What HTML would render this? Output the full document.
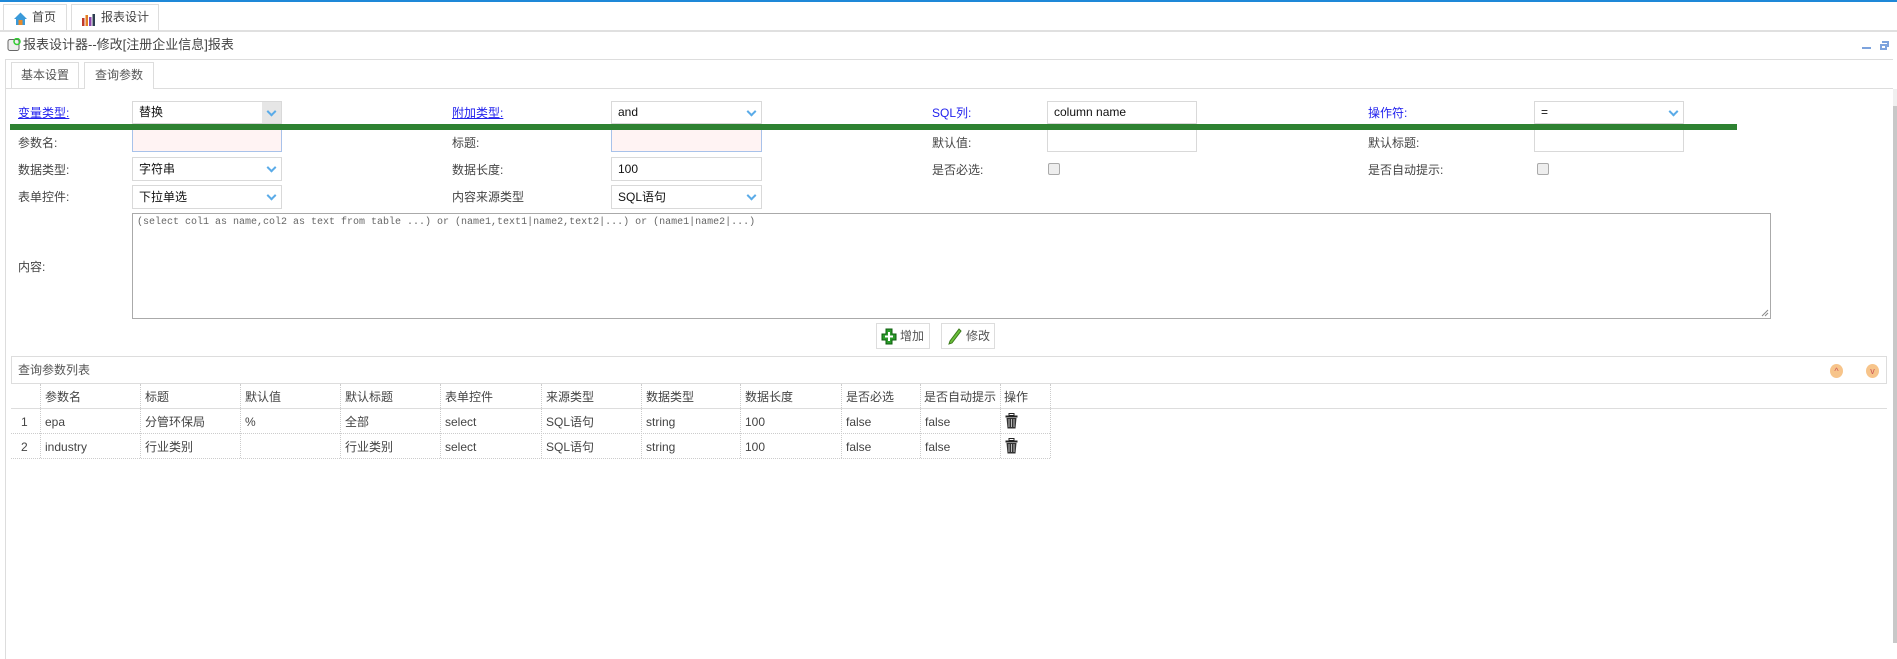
<!DOCTYPE html>
<html><head><meta charset="utf-8">
<style>
*{box-sizing:border-box;margin:0;padding:0}
body{width:1897px;height:643px;overflow:hidden;background:#fff;font-family:"Liberation Sans","Noto Sans CJK SC",sans-serif;font-size:12px;color:#333;position:relative}
.a{position:absolute}
.tab{position:absolute;top:4px;height:27px;border:1px solid #ddd;border-bottom:none;background:#fff;font-size:12px;color:#444;line-height:25px}
.lbl{position:absolute;font-size:12px;color:#444;line-height:16px}
.blue{color:#2222ee}
.box{position:absolute;border:1px solid #d9d9d9;background:#fff;font-size:12px;color:#111;padding-left:6px}
.chev{position:absolute;right:6px;top:50%;width:7px;height:7px;border-right:2px solid #5aabe8;border-bottom:2px solid #5aabe8;transform:translateY(-70%) rotate(45deg)}
.pink{background:#fff3f3;border-color:#a8c2ea}
.th,.td{position:absolute;font-size:12px;color:#444;line-height:16px}
.vl{position:absolute;width:0;border-left:1px dotted #ccc}
</style></head><body>
<div class="a" style="left:0;top:0;width:1897px;height:2px;background:#1e88d8"></div>
<div class="tab" style="left:3px;width:64px;padding-left:10px">
<svg class="a" style="left:9px;top:6px" width="15" height="15" viewBox="0 0 15 15"><path d="M1 8 L7.5 1.5 L14 8 L12 8 L12 14 L3 14 L3 8Z" fill="#3a9ad9"/><rect x="5.5" y="9" width="4" height="5" fill="#e88a2a"/></svg>
<span style="position:absolute;left:28px">首页</span></div>
<div class="tab" style="left:71px;width:88px">
<svg class="a" style="left:9px;top:7px" width="16" height="14" viewBox="0 0 16 14"><rect x="1" y="6" width="2.5" height="8" fill="#c0392b"/><rect x="4.5" y="3" width="2.5" height="11" fill="#e67e22"/><rect x="8" y="5" width="2.5" height="9" fill="#8e44ad"/><rect x="11.5" y="2" width="2.5" height="12" fill="#2c3e50"/></svg>
<span style="position:absolute;left:29px">报表设计</span></div>
<div class="a" style="left:0;top:30px;width:1897px;height:2px;background:#e0e0e0"></div>
<svg class="a" style="left:7px;top:38px" width="14" height="14" viewBox="0 0 14 14"><rect x="1" y="1.5" width="11" height="11" rx="2" fill="#eee" stroke="#666"/><circle cx="10" cy="3.5" r="3" fill="none" stroke="#3c3" stroke-width="1.5"/></svg>
<div class="a" style="left:23px;top:37px;font-size:13px;color:#444;line-height:16px">报表设计器--修改[注册企业信息]报表</div>
<div class="a" style="left:1862px;top:47px;width:9px;height:2px;background:#7da3dd"></div>
<div class="a" style="left:1882px;top:41px;width:7px;height:6px;border:2px solid #7da3dd;border-bottom:none;border-left:none"></div>
<div class="a" style="left:1880px;top:44px;width:7px;height:6px;border:2px solid #7da3dd"></div>
<div class="a" style="left:5px;top:59px;width:1888px;height:600px;border-left:1px solid #ddd;border-top:1px solid #ddd"></div>
<div class="tab" style="left:11px;top:62px;width:68px;text-align:center;font-size:12px;color:#555">基本设置</div>
<div class="tab" style="left:84px;top:62px;width:70px;height:27px;text-align:center;font-size:12px;color:#555;z-index:2">查询参数</div>
<div class="a" style="left:5px;top:88px;width:1888px;height:1px;background:#ddd"></div>
<div class="a" style="left:1893px;top:89px;width:4px;height:554px;background:#f0f0f0"></div>
<div class="a" style="left:1893px;top:106px;width:4px;height:537px;background:#c8c8c8"></div>

<div class="lbl blue" style="left:18px;top:105px;text-decoration:underline">变量类型:</div>
<div class="box" style="left:132px;top:101px;width:150px;height:23px;line-height:21px">替换<div class="a" style="right:0;top:0;width:19px;height:21px;background:#e6e6e6"></div><div class="chev"></div></div>
<div class="lbl blue" style="left:452px;top:105px;text-decoration:underline">附加类型:</div>
<div class="box" style="left:611px;top:101px;width:151px;height:23px;line-height:21px">and<div class="chev"></div></div>
<div class="lbl blue" style="left:932px;top:105px">SQL列:</div>
<div class="box" style="left:1047px;top:101px;width:150px;height:23px;line-height:21px">column name</div>
<div class="lbl blue" style="left:1368px;top:105px">操作符:</div>
<div class="box" style="left:1534px;top:101px;width:150px;height:23px;line-height:21px">=<div class="chev"></div></div>
<div class="lbl" style="left:18px;top:135px">参数名:</div>
<div class="box pink" style="left:132px;top:124px;width:150px;height:28px"></div>
<div class="lbl" style="left:452px;top:135px">标题:</div>
<div class="box pink" style="left:611px;top:124px;width:151px;height:28px"></div>
<div class="lbl" style="left:932px;top:135px">默认值:</div>
<div class="box" style="left:1047px;top:124px;width:150px;height:28px"></div>
<div class="lbl" style="left:1368px;top:135px">默认标题:</div>
<div class="box" style="left:1534px;top:124px;width:150px;height:28px"></div>
<div class="a" style="left:10px;top:124px;width:1727px;height:6px;background:#2e8232"></div>
<div class="lbl" style="left:18px;top:162px">数据类型:</div>
<div class="box" style="left:132px;top:157px;width:150px;height:24px;line-height:22px">字符串<div class="chev"></div></div>
<div class="lbl" style="left:452px;top:162px">数据长度:</div>
<div class="box" style="left:611px;top:157px;width:151px;height:24px;line-height:22px">100</div>
<div class="lbl" style="left:932px;top:162px">是否必选:</div>
<div class="a" style="left:1048px;top:163px;width:12px;height:12px;border:1px solid #aaa;border-radius:2px;background:#eee"></div>
<div class="lbl" style="left:1368px;top:162px">是否自动提示:</div>
<div class="a" style="left:1537px;top:163px;width:12px;height:12px;border:1px solid #aaa;border-radius:2px;background:#eee"></div>
<div class="lbl" style="left:18px;top:189px">表单控件:</div>
<div class="box" style="left:132px;top:185px;width:150px;height:24px;line-height:22px">下拉单选<div class="chev"></div></div>
<div class="lbl" style="left:452px;top:189px">内容来源类型</div>
<div class="box" style="left:611px;top:185px;width:151px;height:24px;line-height:22px">SQL语句<div class="chev"></div></div>
<div class="lbl" style="left:18px;top:259px">内容:</div>
<div class="a" style="left:132px;top:213px;width:1639px;height:106px;border:1px solid #aaa;padding:3px 4px;font-family:'Liberation Mono',monospace;font-size:10px;color:#666;white-space:pre">(select col1 as name,col2 as text from table ...) or (name1,text1|name2,text2|...) or (name1|name2|...)</div>
<svg class="a" style="left:1761px;top:309px" width="8" height="8"><path d="M7 1 L1 7 M7 4 L4 7" stroke="#888"/></svg>
<div class="a" style="left:876px;top:323px;width:54px;height:26px;border:1px solid #ddd;font-size:12px;color:#555;line-height:24px;padding-left:23px">增加
<svg class="a" style="left:4px;top:4px" width="16" height="17" viewBox="0 0 16 17"><path d="M5 1h6v5h4v6h-4v4H5v-4H1V6h4z" fill="#2a9a2a" stroke="#0d5d0d"/><path d="M7 4h2v3.5h3v2H9V13H7V9.5H4v-2h3z" fill="#fff"/></svg></div>
<div class="a" style="left:941px;top:323px;width:54px;height:26px;border:1px solid #ddd;font-size:12px;color:#555;line-height:24px;padding-left:24px">修改
<svg class="a" style="left:6px;top:4px" width="14" height="17" viewBox="0 0 14 17"><path d="M11 1 L13 3 L4 15 L1 16 L2 13Z" fill="#6bbf3a" stroke="#3a7a1a"/></svg></div>
<div class="a" style="left:11px;top:356px;width:1876px;height:28px;border:1px solid #ddd;font-size:12px;color:#555;line-height:26px;padding-left:6px">查询参数列表</div>
<div class="a" style="left:1830px;top:364px;width:13px;height:14px;border-radius:50%;background:#f7c48a;color:#c55;font-size:9px;text-align:center;line-height:14px">^</div>
<div class="a" style="left:1866px;top:364px;width:13px;height:14px;border-radius:50%;background:#f7c48a;color:#c55;font-size:9px;text-align:center;line-height:14px">v</div>
<div class="a" style="left:11px;top:408px;width:1876px;height:1px;background:#ddd"></div>
<div class="a" style="left:11px;top:433px;width:1039px;border-top:1px dotted #ccc"></div>
<div class="a" style="left:11px;top:458px;width:1039px;border-top:1px dotted #ccc"></div>
<div class="vl" style="left:40px;top:384px;height:74px"></div>
<div class="vl" style="left:140px;top:384px;height:74px"></div>
<div class="vl" style="left:240px;top:384px;height:74px"></div>
<div class="vl" style="left:340px;top:384px;height:74px"></div>
<div class="vl" style="left:440px;top:384px;height:74px"></div>
<div class="vl" style="left:541px;top:384px;height:74px"></div>
<div class="vl" style="left:641px;top:384px;height:74px"></div>
<div class="vl" style="left:740px;top:384px;height:74px"></div>
<div class="vl" style="left:841px;top:384px;height:74px"></div>
<div class="vl" style="left:920px;top:384px;height:74px"></div>
<div class="vl" style="left:1000px;top:384px;height:74px"></div>
<div class="vl" style="left:1050px;top:384px;height:74px"></div>
<div class="th" style="left:45px;top:389px">参数名</div>
<div class="th" style="left:145px;top:389px">标题</div>
<div class="th" style="left:245px;top:389px">默认值</div>
<div class="th" style="left:345px;top:389px">默认标题</div>
<div class="th" style="left:445px;top:389px">表单控件</div>
<div class="th" style="left:546px;top:389px">来源类型</div>
<div class="th" style="left:646px;top:389px">数据类型</div>
<div class="th" style="left:745px;top:389px">数据长度</div>
<div class="th" style="left:846px;top:389px">是否必选</div>
<div class="th" style="left:924px;top:389px">是否自动提示</div>
<div class="th" style="left:1004px;top:389px">操作</div>
<div class="td" style="left:21px;top:414px">1</div>
<div class="td" style="left:45px;top:414px">epa</div>
<div class="td" style="left:145px;top:414px">分管环保局</div>
<div class="td" style="left:245px;top:414px">%</div>
<div class="td" style="left:345px;top:414px">全部</div>
<div class="td" style="left:445px;top:414px">select</div>
<div class="td" style="left:546px;top:414px">SQL语句</div>
<div class="td" style="left:646px;top:414px">string</div>
<div class="td" style="left:745px;top:414px">100</div>
<div class="td" style="left:846px;top:414px">false</div>
<div class="td" style="left:925px;top:414px">false</div>
<div class="td" style="left:21px;top:439px">2</div>
<div class="td" style="left:45px;top:439px">industry</div>
<div class="td" style="left:145px;top:439px">行业类别</div>
<div class="td" style="left:345px;top:439px">行业类别</div>
<div class="td" style="left:445px;top:439px">select</div>
<div class="td" style="left:546px;top:439px">SQL语句</div>
<div class="td" style="left:646px;top:439px">string</div>
<div class="td" style="left:745px;top:439px">100</div>
<div class="td" style="left:846px;top:439px">false</div>
<div class="td" style="left:925px;top:439px">false</div>
<svg class="a" style="left:1005px;top:413px" width="13" height="16" viewBox="0 0 13 16"><rect x="4" y="0.5" width="5" height="2" fill="none" stroke="#222"/><rect x="0.5" y="2.5" width="12" height="2" fill="#222"/><path d="M1.5 5h10l-1 10.5h-8z" fill="#333"/><path d="M4 6v8M6.5 6v8M9 6v8" stroke="#bbb"/></svg>
<svg class="a" style="left:1005px;top:438px" width="13" height="16" viewBox="0 0 13 16"><rect x="4" y="0.5" width="5" height="2" fill="none" stroke="#222"/><rect x="0.5" y="2.5" width="12" height="2" fill="#222"/><path d="M1.5 5h10l-1 10.5h-8z" fill="#333"/><path d="M4 6v8M6.5 6v8M9 6v8" stroke="#bbb"/></svg>
</body></html>
